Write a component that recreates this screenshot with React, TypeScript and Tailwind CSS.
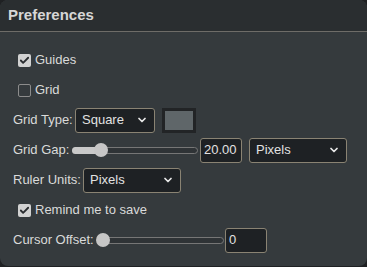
import { ChevronDown, Check } from "lucide-react"

const font = { fontFamily: '"Liberation Sans", Arial, sans-serif' }

function CheckBox({ checked, label }: { checked: boolean; label: string }) {
  return (
    <div className="flex h-[30px] items-center pl-[18px]">
      {checked ? (
        <span className="flex h-[13px] w-[13px] items-center justify-center rounded-[2px] bg-[#d2d2d2]">
          <Check size={11} strokeWidth={4} className="text-[#2a2d30]" />
        </span>
      ) : (
        <span className="h-[13px] w-[13px] rounded-[2px] border border-[#8c8c8c]" />
      )}
      <span className="ml-[4px] text-[13px] text-[#dadada]">{label}</span>
    </div>
  )
}

function Select({ value, width }: { value: string; width: string }) {
  return (
    <div
      className={`flex h-[25px] items-center justify-between rounded-[3px] border border-[#8a8373] bg-[#1e2124] pl-[6px] pr-[6px] text-[13px] text-[#e2e2e2] ${width}`}
    >
      <span>{value}</span>
      <ChevronDown size={12} strokeWidth={3.5} className="text-[#e8e8e8]" />
    </div>
  )
}

function Slider({ width, pos }: { width: string; pos: number }) {
  return (
    <div className={`relative flex h-[16px] items-center ${width}`}>
      <div className="h-[7px] w-full rounded-full border border-[#767676] bg-[#2f3336]" />
      <div
        className="absolute left-0 top-[4.5px] h-[7px] rounded-full bg-[#c9c9c9]"
        style={{ width: pos }}
      />
      <div
        className="absolute top-[1px] h-[14px] w-[14px] rounded-full bg-[#c6c6c6]"
        style={{ left: pos - 7 }}
      />
    </div>
  )
}

function NumInput({ value }: { value: string }) {
  return (
    <div className="flex h-[25px] w-[42px] items-center rounded-[3px] border border-[#8a8373] bg-[#1e2124] pl-[3px] text-[13px] text-[#e2e2e2]">
      {value}
    </div>
  )
}

export default function App() {
  return (
    <div className="h-[267px] w-[367px] bg-[#1f2123]" style={font}>
      <div className="h-[266px] w-[367px] overflow-hidden rounded-[8px] bg-[#353a3d]">
        <div className="flex h-[32px] items-center border-b border-[#6e6c68] bg-[#2a2e30] pl-[8px] text-[15px] font-bold text-[#d6d6d6]">
          Preferences
        </div>
        <div className="pt-[13px]">
          <CheckBox checked label="Guides" />
          <CheckBox checked={false} label="Grid" />
          <div className="flex h-[30px] items-center pl-[13px] text-[13px] text-[#dadada]">
            <span className="w-[62px]">Grid Type:</span>
            <Select value="Square" width="w-[80px]" />
            <div className="ml-[7px] flex h-[25px] w-[34px] items-center justify-center bg-[#222426]">
              <div className="h-[19px] w-[28px] bg-[#5f6669]" />
            </div>
          </div>
          <div className="flex h-[30px] items-center pl-[13px] text-[13px] text-[#dadada]">
            <span className="w-[59px]">Grid Gap:</span>
            <Slider width="w-[126px]" pos={29} />
            <div className="ml-[2px]">
              <NumInput value="20.00" />
            </div>
            <div className="ml-[7px]">
              <Select value="Pixels" width="w-[98px]" />
            </div>
          </div>
          <div className="flex h-[30px] items-center pl-[13px] text-[13px] text-[#dadada]">
            <span className="w-[70px]">Ruler Units:</span>
            <Select value="Pixels" width="w-[98px]" />
          </div>
          <CheckBox checked label="Remind me to save" />
          <div className="flex h-[30px] items-center pl-[13px] text-[13px] text-[#dadada]">
            <span className="w-[84px]">Cursor Offset:</span>
            <Slider width="w-[127px]" pos={6} />
            <div className="ml-[1px]">
              <NumInput value="0" />
            </div>
          </div>
        </div>
      </div>
    </div>
  )
}
